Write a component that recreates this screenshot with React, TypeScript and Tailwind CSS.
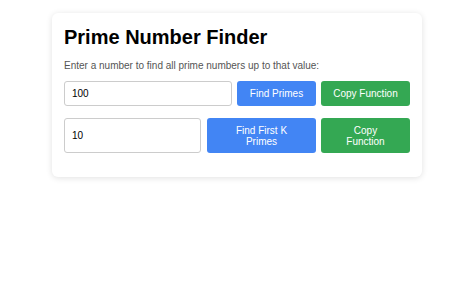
import React from 'react';

export default function App() {
  const [limit, setLimit] = React.useState('100');
  const [k, setK] = React.useState('10');

  return (
    <div className="min-h-screen bg-white" style={{ fontFamily: '"Liberation Sans", Arial, sans-serif' }}>
      <div className="ml-[52px] pt-[13px]">
        <div className="w-[370px] rounded-md bg-white px-3 pt-3 pb-6 shadow-[0_1px_6px_rgba(0,0,0,0.12)]">
          <h1 className="text-[20px] leading-[24px] font-bold text-black">Prime Number Finder</h1>
          <p className="mt-[11px] text-[10px] leading-[12px] text-[#555]">
            Enter a number to find all prime numbers up to that value:
          </p>

          {/* Range search */}
          <div className="mt-[9px] flex gap-[5px]">
            <input
              value={limit}
              onChange={(e) => setLimit(e.target.value)}
              className="h-[25px] w-[168px] rounded-[3px] border border-[#ccc] px-[7px] text-[10px] text-black outline-none"
            />
            <button className="h-[25px] w-[79px] rounded-[3px] bg-[#4285f4] text-[10px] text-white">
              Find Primes
            </button>
            <button className="h-[25px] w-[89px] rounded-[3px] bg-[#34a853] text-[10px] text-white">
              Copy Function
            </button>
          </div>

          {/* First K search */}
          <div className="mt-[12px] flex gap-[5px]">
            <input
              value={k}
              onChange={(e) => setK(e.target.value)}
              className="h-[35px] w-[137px] rounded-[3px] border border-[#ccc] px-[7px] text-[10px] text-black outline-none"
            />
            <button className="ml-px h-[35px] w-[109px] rounded-[3px] bg-[#4285f4] px-4 text-[10px] leading-[11px] text-white">
              Find First K Primes
            </button>
            <button className="h-[35px] w-[89px] rounded-[3px] bg-[#34a853] px-5 text-[10px] leading-[11px] text-white">
              Copy Function
            </button>
          </div>
        </div>
      </div>
    </div>
  );
}
